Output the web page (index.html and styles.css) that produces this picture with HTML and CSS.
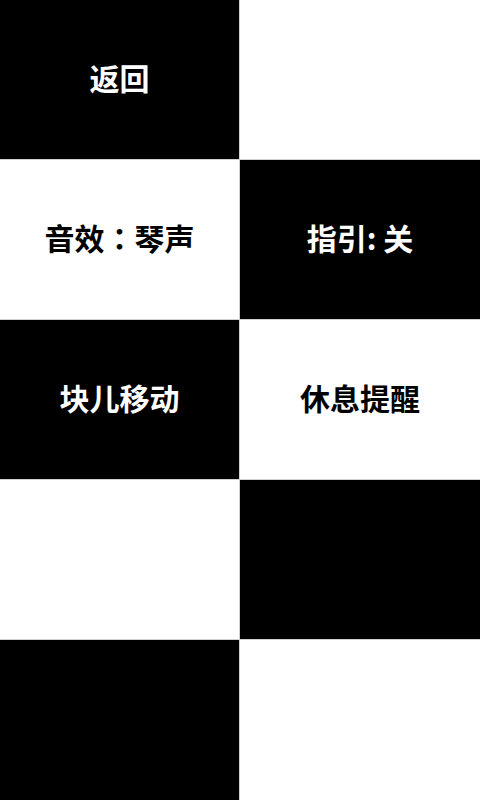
FILE: index.html
```html
<!DOCTYPE html>
<html lang="zh-CN">
<head>
<meta charset="utf-8">
<link rel="stylesheet" href="styles.css">
</head>
<body>
<div class="board">
  <div class="tile dark">返回</div>
  <div class="tile light"></div>
  <div class="tile light">音效<span class="colon">：</span>琴声</div>
  <div class="tile dark">指引: 关</div>
  <div class="tile dark">块儿移动</div>
  <div class="tile light">休息提醒</div>
  <div class="tile light"></div>
  <div class="tile dark"></div>
  <div class="tile dark"></div>
  <div class="tile light"></div>
</div>
</body>
</html>
```
FILE: styles.css
```css
html, body {
  margin: 0;
  padding: 0;
  background: #ffffff;
}
.board {
  width: 480px;
  height: 800px;
  display: grid;
  grid-template-columns: 240px 240px;
  grid-template-rows: repeat(5, 160px);
}
.tile {
  box-sizing: border-box;
  border-right: 1px solid #d0d0d0;
  border-bottom: 1px solid #d0d0d0;
  display: flex;
  align-items: center;
  justify-content: center;
  font-family: "Noto Sans CJK SC", "Noto Sans", sans-serif;
  font-weight: 700;
  font-size: 30px;
  padding-bottom: 5px;
}
.tile:nth-child(2n) {
  border-right: none;
}
.tile:nth-last-child(-n+2) {
  border-bottom: none;
}
.colon {
  font-family: "Noto Sans CJK TC", "Noto Sans CJK SC", sans-serif;
}
.dark {
  background: #000000;
  color: #ffffff;
}
.light {
  background: #ffffff;
  color: #000000;
}
```
